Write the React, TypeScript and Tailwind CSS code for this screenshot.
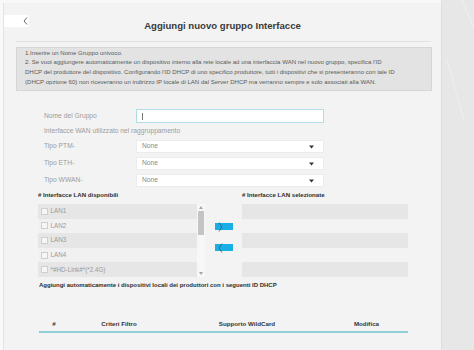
import React from "react";

const font = { fontFamily: "'Liberation Sans', Arial, sans-serif" };

function Select() {
  return (
    <div className="w-[188px] h-[13px] bg-white border border-[#ececec] flex items-center justify-between pl-[5px] pr-[9px]">
      <span className="text-[6.7px] text-[#8a8a8a] leading-none">None</span>
      <svg width="5" height="4" viewBox="0 0 5 4">
        <path d="M0 0.5 L5 0.5 L2.5 3.5 Z" fill="#333" />
      </svg>
    </div>
  );
}

function LeftRow({ label, gray }: { label: string; gray: boolean }) {
  return (
    <div className={`h-[14.6px] flex items-center pl-[3px] ${gray ? "bg-[#e6e6e6]" : "bg-[#f1f1f1]"}`}>
      <div className="w-[7px] h-[7px] border border-[#cfcfcf] bg-[#f6f6f6]" />
      <span className="ml-[2.5px] text-[6.3px] text-[#9a9a9a] leading-none">{label}</span>
    </div>
  );
}

export default function App() {
  const lans = ["LAN1", "LAN2", "LAN3", "LAN4", "*#HD-Link#*(*2.4G)"];
  return (
    <div className="w-[474px] h-[350px] overflow-hidden flex bg-[#f9f9f9]" style={font}>
      <div className="ml-[3px] mt-[3px] w-[438px] h-[347px] bg-[#f3f3f3] border-l border-[#e4e4e4] flex flex-col">
        {/* header */}
        <div className="mt-[12px] h-[26px] flex items-start">
          <div className="w-[25px] h-[12px] bg-white flex items-center justify-end pr-[1px]">
            <svg width="5" height="8" viewBox="0 0 5 8">
              <path d="M4 0.5 L1 4 L4 7.5" stroke="#555" strokeWidth="0.9" fill="none" />
            </svg>
          </div>
          <div className="flex-1 text-center mt-[4.5px] text-[9.6px] leading-[12px] font-bold text-[#3a3a3a]">
            Aggiungi nuovo gruppo Interfacce
          </div>
          <div className="w-[25px]" />
        </div>
        <div className="ml-[12px] w-[415px] h-px bg-[#e2e2e2]" />
        {/* info box */}
        <div className="mt-[5px] ml-[12px] w-[416px] h-[44px] bg-[#e3e3e3] border border-[#d6d6d6] pl-[8px] pt-[0.5px] text-[6.05px] leading-[9.7px] text-[#5a5a5a]">
          <div className="whitespace-nowrap">1.Inserire un Nome Gruppo univoco.</div>
          <div className="whitespace-nowrap">
            2. Se vuoi aggiungere automaticamente un dispositivo interno alla rete locale ad una interfaccia WAN nel nuovo gruppo, specifica l'ID
          </div>
          <div className="whitespace-nowrap">
            DHCP del produttore del dispositivo. Configurando l'ID DHCP di uno specifico produttore, tutti i dispositivi che si presenteranno con tale ID
          </div>
          <div className="whitespace-nowrap">
            (DHCP opzione 60) non riceveranno un indirizzo IP locale di LAN dal Server DHCP ma verranno sempre e solo associati alla WAN.
          </div>
        </div>
        {/* form */}
        <div className="mt-[18px] pl-[40px] flex flex-col text-[6.7px] text-[#9c9c9c]">
          <div className="flex items-center h-[14px]">
            <div className="w-[92px] leading-none">Nome del Gruppo</div>
            <div className="w-[188px] h-[14px] bg-white border border-[#b3dde4] flex items-center pl-[5px]">
              <div className="w-px h-[7px] bg-[#777]" />
            </div>
          </div>
          <div className="mt-[1px] h-[14px] leading-[14px]">Interfacce WAN utilizzato nel raggruppamento</div>
          <div className="mt-[2px] flex items-center h-[13px]">
            <div className="w-[92px] leading-none">Tipo PTM-</div>
            <Select />
          </div>
          <div className="mt-[4px] flex items-center h-[13px]">
            <div className="w-[92px] leading-none">Tipo ETH-</div>
            <Select />
          </div>
          <div className="mt-[4px] flex items-center h-[13px]">
            <div className="w-[92px] leading-none">Tipo WWAN-</div>
            <Select />
          </div>
        </div>
        {/* LAN section */}
        <div className="mt-[3px] pl-[34px] flex h-[10px] items-center text-[6.1px] font-bold text-[#2e2e2e]">
          <div className="w-[204px]"># Interfacce LAN disponibili</div>
          <div># Interfacce LAN selezionate</div>
        </div>
        <div className="mt-[4px] pl-[34px] flex">
          <div className="w-[159px] flex flex-col">
            {lans.map((l, i) => (
              <LeftRow key={l} label={l} gray={i % 2 === 0} />
            ))}
          </div>
          <div className="w-[8px] h-[73px] bg-[#f7f7f7] flex flex-col items-center">
            <svg width="4" height="3" viewBox="0 0 4 3" className="mt-[2px]">
              <path d="M0 3 L2 0 L4 3 Z" fill="#a5a5a5" />
            </svg>
            <div className="mt-[1.5px] w-[6px] h-[24px] bg-[#c4c4c4]" />
            <div className="flex-1" />
            <svg width="4" height="3" viewBox="0 0 4 3" className="mb-[2px]">
              <path d="M0 0 L4 0 L2 3 Z" fill="#a5a5a5" />
            </svg>
          </div>
          <div className="w-[37px] flex flex-col items-center pt-[19px]">
            <div className="w-[18px] h-[7px] bg-[#1aaee6] relative">
              <svg width="5" height="10" viewBox="0 0 5 10" className="absolute left-[3px] top-[-1.5px]">
                <path d="M1 0.5 L4 5 L1 9.5" stroke="#3a5566" strokeWidth="0.8" fill="none" />
              </svg>
            </div>
            <div className="mt-[14px] w-[18px] h-[7px] bg-[#1aaee6] relative">
              <svg width="5" height="10" viewBox="0 0 5 10" className="absolute left-[3px] top-[-1.5px]">
                <path d="M4 0.5 L1 5 L4 9.5" stroke="#3a5566" strokeWidth="0.8" fill="none" />
              </svg>
            </div>
          </div>
          <div className="w-[166px] flex flex-col">
            {lans.map((l, i) => (
              <div key={l} className={`h-[14.6px] ${i % 2 === 0 ? "bg-[#e6e6e6]" : ""}`} />
            ))}
          </div>
        </div>
        <div className="mt-[3.5px] pl-[35px] h-[10px] flex items-center text-[6px] font-bold text-[#2e2e2e] whitespace-nowrap">
          Aggiungi automaticamente i dispositivi locali dei produttori con i seguenti ID DHCP
        </div>
        {/* table header */}
        <div className="mt-[26.5px] ml-[35px] w-[369px] h-[16px] border-b-2 border-[#8fcfd6] flex items-center text-[6.2px] font-bold text-[#333]">
          <div className="w-[30px] text-center">#</div>
          <div className="w-[100px] text-center">Criteri Filtro</div>
          <div className="w-[156px] text-center">Supporto WildCard</div>
          <div className="w-[83px] text-center">Modifica</div>
        </div>
      </div>
      <div className="w-[33px] h-[350px] bg-[#e7e7e7] border-l border-[#dedede] relative">
        <svg width="33" height="350" viewBox="0 0 33 350" className="absolute inset-0">
          <path d="M5 60 L22 120" stroke="#efefef" strokeWidth="1" fill="none" />
          <path d="M20 0 L33 30" stroke="#efefef" strokeWidth="1" fill="none" />
        </svg>
      </div>
    </div>
  );
}
